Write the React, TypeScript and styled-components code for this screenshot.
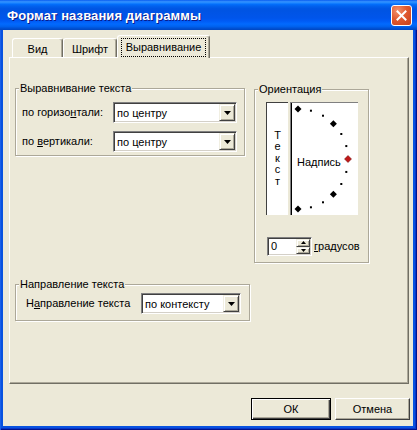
import React from "react";
import styled, { createGlobalStyle } from "styled-components";

const GlobalStyle = createGlobalStyle`
  html, body { margin: 0; padding: 0; background: #fff; }
  body { font-family: "Liberation Sans", Arial, sans-serif; font-size: 11px; color: #000; }
  * { box-sizing: border-box; }
`;

const BG = "#ECE9D8";

const Window = styled.div`
  width: 417px;
  height: 430px;
  display: flex;
  flex-direction: column;
  background: #0852e0;
  box-shadow: inset 1px 0 0 #1a5fe8, inset -1px -1px 0 #00138c, inset -2px -2px 0 #0836c8;
`;

const TitleBar = styled.div`
  height: 30px;
  flex: none;
  display: flex;
  align-items: center;
  justify-content: space-between;
  padding: 0 5px 0 7px;
  background: linear-gradient(
    to bottom,
    #0a5cf0 0%,
    #3593ff 6%,
    #1d86ff 10%,
    #036ffc 14%,
    #0262ee 20%,
    #0057e5 28%,
    #0054e3 34%,
    #0055eb 60%,
    #005bf5 70%,
    #026afe 80%,
    #0062ef 88%,
    #0052d6 94%,
    #0045c0 100%
  );
`;

const Title = styled.span`
  color: #fff;
  font-family: "Liberation Sans", Arial, sans-serif;
  font-weight: bold;
  font-size: 13px;
  letter-spacing: 0.1px;
  text-shadow: 1px 1px 0 #0a1a8a;
  padding-top: 1px;
`;

const CloseButton = styled.div`
  width: 21px;
  height: 21px;
  border: 1px solid #fff;
  border-radius: 3px;
  background: radial-gradient(circle at 30% 25%, #f2926e 0%, #e05a30 45%, #c8401c 100%);
  display: flex;
  align-items: center;
  justify-content: center;
  margin-top: 1px;
`;

const Body = styled.div`
  flex: 1;
  margin: 0 4px 4px 3px;
  background: ${BG};
  padding: 6px 4px 6px 6px;
  display: flex;
  flex-direction: column;
`;

const TabRow = styled.div`
  height: 21px;
  flex: none;
  display: flex;
  align-items: flex-end;
  padding-left: 3px;
  position: relative;
  z-index: 1;
`;

const Tab = styled.div<{ $active?: boolean; $w: number }>`
  width: ${(p) => p.$w}px;
  height: ${(p) => (p.$active ? 23 : 19)}px;
  margin-bottom: ${(p) => (p.$active ? -1 : 0)}px;
  background: ${BG};
  border-top: 1px solid #fff;
  border-left: 1px solid #fff;
  border-right: 1px solid #716f64;
  box-shadow: inset -1px 0 0 #aca899;
  border-radius: 3px 3px 0 0;
  display: flex;
  align-items: ${(p) => (p.$active ? "flex-start" : "center")};
  justify-content: center;
  padding-top: ${(p) => (p.$active ? 3 : 1)}px;
  white-space: nowrap;
`;

const Focus = styled.span`
  outline: 1px dotted #000;
  outline-offset: 0;
  padding: 2px 4px 2px 4px;
  line-height: 13px;
`;

const Panel = styled.div`
  flex: 1;
  border: 1px solid;
  border-color: #fff #716f64 #716f64 #fff;
  box-shadow: inset -1px -1px 0 #aca899;
  padding: 30px 5px 0 5px;
  display: flex;
  align-items: flex-start;
`;

const LeftCol = styled.div`
  width: 236px;
  display: flex;
  flex-direction: column;
`;

const RightCol = styled.div`
  margin-left: 3px;
  margin-top: 1px;
`;

const GroupBox = styled.div<{ $w: number; $h?: number; $mt?: number }>`
  position: relative;
  width: ${(p) => p.$w}px;
  ${(p) => (p.$h ? `height: ${p.$h}px;` : "")}
  margin-top: ${(p) => p.$mt ?? 0}px;
  border: 1px solid #aca899;
  box-shadow: 1px 1px 0 #fff, inset 1px 1px 0 #fff;
`;

const Legend = styled.span`
  position: absolute;
  top: -7px;
  left: 3px;
  padding: 0 1px;
  line-height: 13px;
  background: ${BG};
  white-space: nowrap;
`;

const AlignGroupBody = styled.div`
  padding: 13px 7px 3px 6px;
  display: flex;
  flex-direction: column;
  gap: 8px;
`;

const FieldRow = styled.div`
  height: 21px;
  display: flex;
  align-items: center;
`;

const Label = styled.span`
  white-space: nowrap;
  line-height: 13px;
`;

const Combo = styled.div<{ $w: number }>`
  margin-left: auto;
  width: ${(p) => p.$w}px;
  height: 21px;
  display: flex;
  background: #fff;
  border: 1px solid;
  border-color: #808080 #fff #fff #808080;
  box-shadow: inset 1px 1px 0 #404040, inset -1px -1px 0 #d4d0c8;
  padding: 1px 1px 1px 1px;
`;

const ComboValue = styled.span`
  flex: 1;
  padding-left: 2px;
  padding-top: 1px;
  line-height: 16px;
  white-space: nowrap;
`;

const RaisedBtn = styled.div`
  background: ${BG};
  border: 1px solid;
  border-color: #f1efe2 #404040 #404040 #f1efe2;
  box-shadow: inset 1px 1px 0 #fff, inset -1px -1px 0 #aca899;
  display: flex;
  align-items: center;
  justify-content: center;
`;

const ArrowBtn = styled(RaisedBtn)`
  width: 16px;
  height: 17px;
  padding-left: 1px;
`;

const OrientBody = styled.div`
  padding: 12px 0 0 11px;
`;

const DialRow = styled.div`
  display: flex;
  gap: 2px;
  height: 113px;
`;

const VerticalText = styled.div`
  width: 22px;
  background: #fff;
  box-shadow: inset 1px 1px 0 #404040;
  display: flex;
  flex-direction: column;
  align-items: center;
  justify-content: center;
  line-height: 11.5px;
  padding-left: 1px;
`;

const Dial = styled.div`
  position: relative;
  width: 68px;
  background: #fff;
  box-shadow: inset 1px 1px 0 #808080, inset 2px 0 0 #000;
  display: flex;
  align-items: center;
  padding: 7px 0 0 7px;
`;

const DialSvg = styled.svg`
  position: absolute;
  inset: 0;
`;

const SpinRow = styled.div`
  margin-top: 22px;
  padding-left: 1px;
  display: flex;
  align-items: center;
  gap: 2px;
`;

const SpinBox = styled.div`
  width: 45px;
  height: 19px;
  display: flex;
  background: #fff;
  border: 1px solid;
  border-color: #808080 #fff #fff #808080;
  box-shadow: inset 1px 1px 0 #404040, inset -1px -1px 0 #d4d0c8;
  padding: 1px;
`;

const SpinValue = styled.span`
  flex: 1;
  padding-left: 2px;
  line-height: 15px;
`;

const SpinButtons = styled.div`
  width: 14px;
  display: flex;
  flex-direction: column;
`;

const SpinBtn = styled(RaisedBtn)`
  flex: 1;
`;

const DirBody = styled.div`
  padding: 8px 8px 6px 10px;
`;

const ButtonRow = styled.div`
  flex: none;
  margin-top: 14px;
  margin-right: -1px;
  display: flex;
  justify-content: flex-end;
  gap: 4px;
`;

const Button = styled.div<{ $w: number; $default?: boolean }>`
  width: ${(p) => p.$w}px;
  height: 22px;
  background: ${BG};
  display: flex;
  align-items: center;
  justify-content: center;
  border: 1px solid;
  border-color: ${(p) => (p.$default ? "#000" : "#fff #404040 #404040 #fff")};
  box-shadow: ${(p) =>
    p.$default
      ? "inset 1px 1px 0 #fff, inset -1px -1px 0 #404040, inset -2px -2px 0 #aca899"
      : "inset -1px -1px 0 #aca899"};
`;

const DownTri = () => (
  <svg width="7" height="4" viewBox="0 0 7 4">
    <polygon points="0,0 7,0 3.5,4" fill="#000" />
  </svg>
);

const SmallTri = ({ up }: { up?: boolean }) => (
  <svg width="5" height="3" viewBox="0 0 5 3">
    <polygon points={up ? "0,3 5,3 2.5,0" : "0,0 5,0 2.5,3"} fill="#000" />
  </svg>
);

const DialDrawing = () => {
  const cx = 8;
  const cy = 57;
  const r = 50;
  const pts: React.ReactNode[] = [];
  for (let a = -90; a <= 90; a += 15) {
    const rad = (a * Math.PI) / 180;
    const x = cx + r * Math.cos(rad);
    const y = cy - r * Math.sin(rad);
    if (a % 45 === 0) {
      const s = 3.5;
      const red = a === 0;
      pts.push(
        <polygon
          key={a}
          points={`${x},${y - s} ${x + s},${y} ${x},${y + s} ${x - s},${y}`}
          fill={red ? "#c01818" : "#000"}
          stroke={red ? "#600" : "none"}
          strokeWidth={red ? 0.5 : 0}
        />
      );
    } else {
      pts.push(<rect key={a} x={x - 1} y={y - 1} width={2} height={2} fill="#000" />);
    }
  }
  return (
    <DialSvg width="68" height="113" viewBox="0 0 68 113">
      {pts}
    </DialSvg>
  );
};

export default function App() {
  return (
    <>
      <GlobalStyle />
      <Window>
        <TitleBar>
          <Title>Формат названия диаграммы</Title>
          <CloseButton>
            <svg width="11" height="11" viewBox="0 0 11 11">
              <path d="M1.5 1.5 L9.5 9.5 M9.5 1.5 L1.5 9.5" stroke="#fff" strokeWidth="2" strokeLinecap="square" />
            </svg>
          </CloseButton>
        </TitleBar>
        <Body>
          <TabRow>
            <Tab $w={51}>Вид</Tab>
            <Tab $w={54}>Шрифт</Tab>
            <Tab $w={93} $active>
              <Focus>Выравнивание</Focus>
            </Tab>
          </TabRow>
          <Panel>
            <LeftCol>
              <GroupBox $w={230}>
                <Legend>Выравнивание текста</Legend>
                <AlignGroupBody>
                  <FieldRow>
                    <Label>
                      по горизо<u>н</u>тали:
                    </Label>
                    <Combo $w={124}>
                      <ComboValue>по центру</ComboValue>
                      <ArrowBtn>
                        <DownTri />
                      </ArrowBtn>
                    </Combo>
                  </FieldRow>
                  <FieldRow>
                    <Label>
                      по <u>в</u>ертикали:
                    </Label>
                    <Combo $w={124}>
                      <ComboValue>по центру</ComboValue>
                      <ArrowBtn>
                        <DownTri />
                      </ArrowBtn>
                    </Combo>
                  </FieldRow>
                </AlignGroupBody>
              </GroupBox>
              <GroupBox $w={235} $mt={128}>
                <Legend>Направление текста</Legend>
                <DirBody>
                  <FieldRow>
                    <Label>
                      Н<u>а</u>правление текста
                    </Label>
                    <Combo $w={100}>
                      <ComboValue>по контексту</ComboValue>
                      <ArrowBtn>
                        <DownTri />
                      </ArrowBtn>
                    </Combo>
                  </FieldRow>
                </DirBody>
              </GroupBox>
            </LeftCol>
            <RightCol>
              <GroupBox $w={115} $h={174}>
                <Legend>Ориентация</Legend>
                <OrientBody>
                  <DialRow>
                    <VerticalText>
                      <span>Т</span>
                      <span>е</span>
                      <span>к</span>
                      <span>с</span>
                      <span>т</span>
                    </VerticalText>
                    <Dial>
                      <DialDrawing />
                      <Label>Надпись</Label>
                    </Dial>
                  </DialRow>
                  <SpinRow>
                    <SpinBox>
                      <SpinValue>0</SpinValue>
                      <SpinButtons>
                        <SpinBtn>
                          <SmallTri up />
                        </SpinBtn>
                        <SpinBtn>
                          <SmallTri />
                        </SpinBtn>
                      </SpinButtons>
                    </SpinBox>
                    <Label>
                      <u>г</u>радусов
                    </Label>
                  </SpinRow>
                </OrientBody>
              </GroupBox>
            </RightCol>
          </Panel>
          <ButtonRow>
            <Button $w={80} $default>
              ОК
            </Button>
            <Button $w={75}>Отмена</Button>
          </ButtonRow>
        </Body>
      </Window>
    </>
  );
}
